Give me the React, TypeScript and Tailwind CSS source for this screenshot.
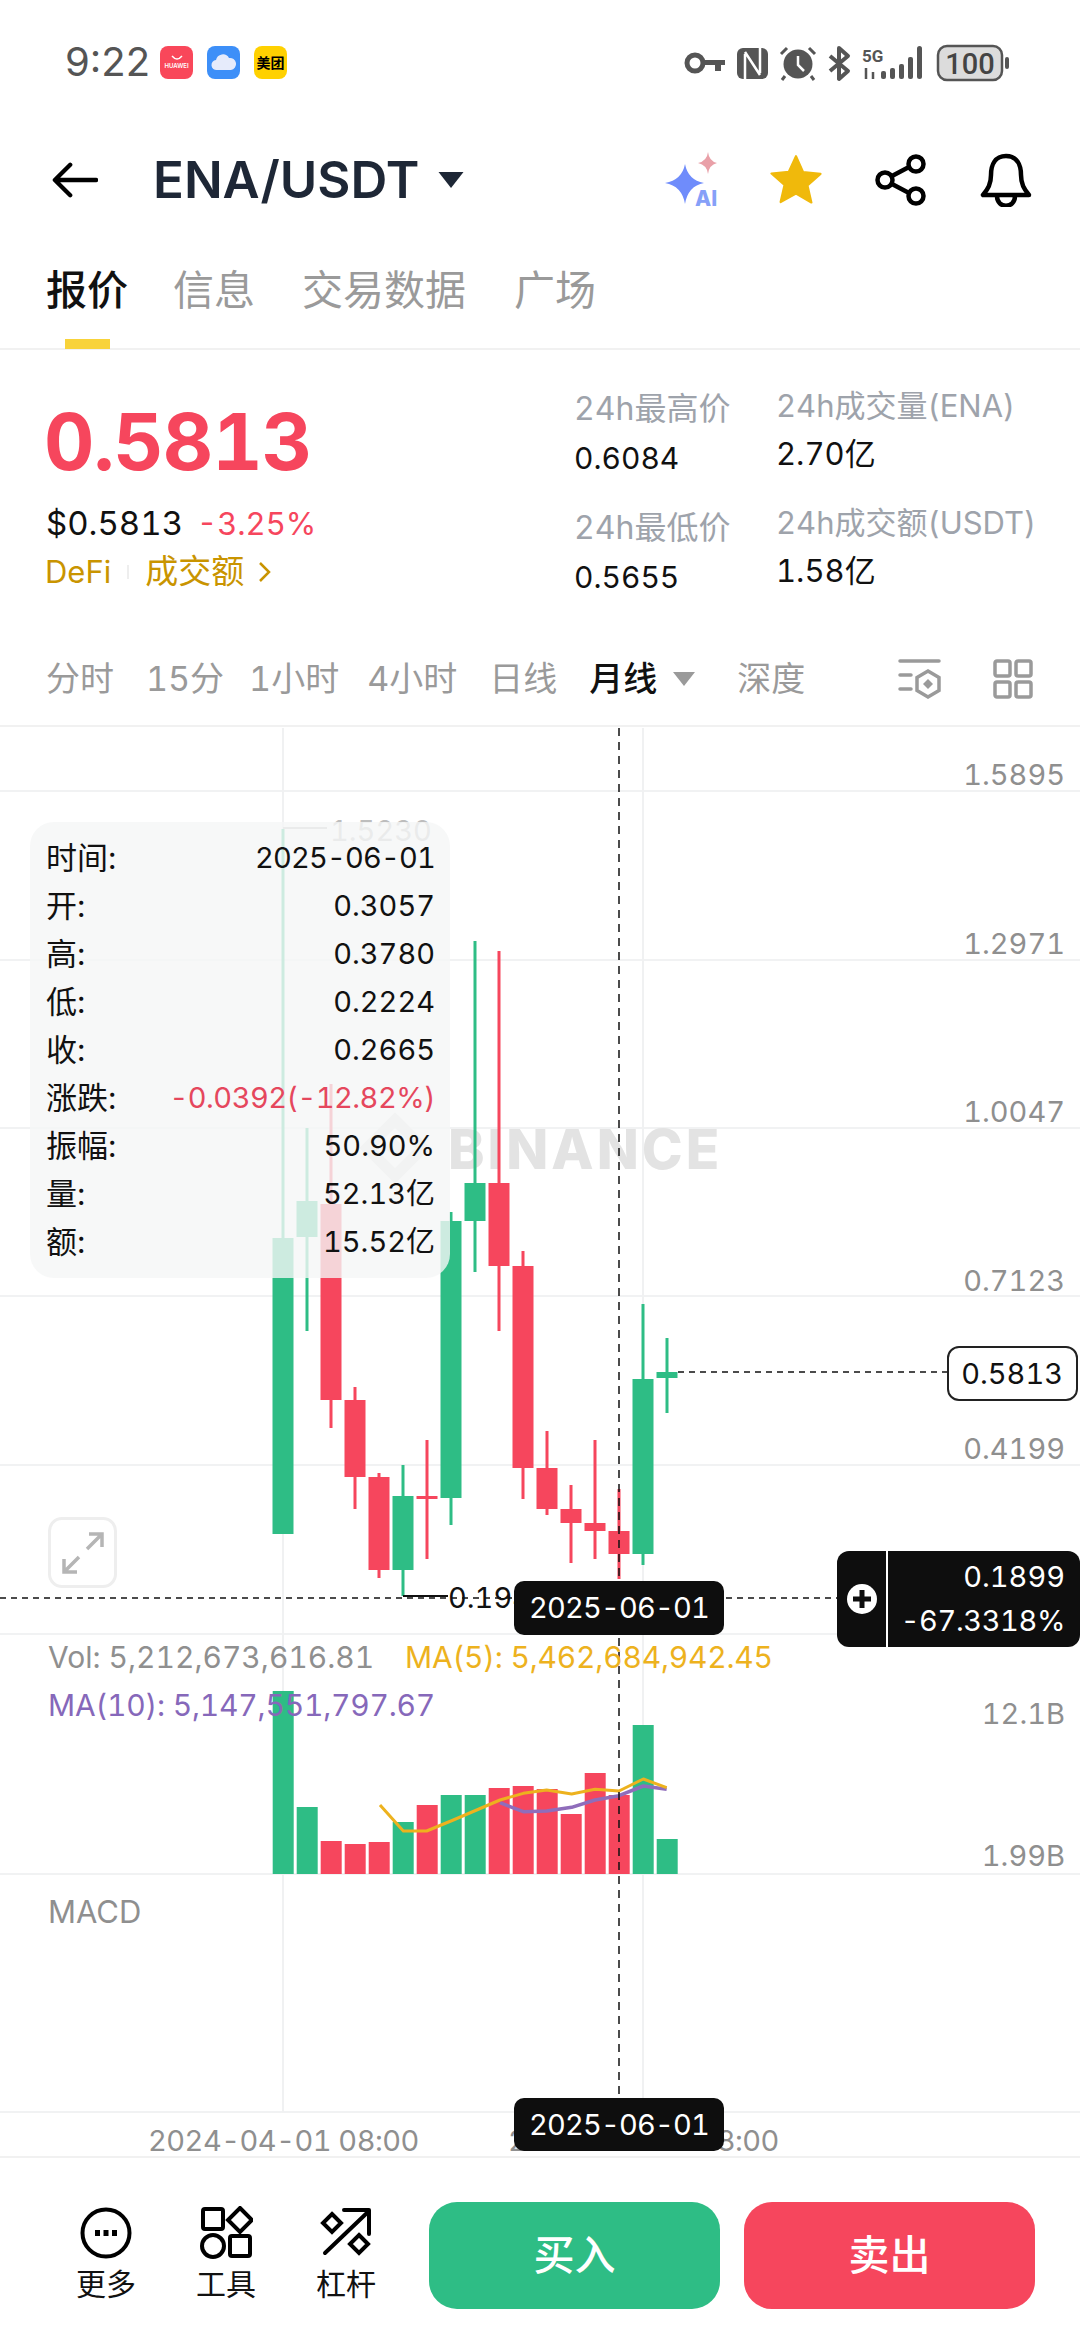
import React from "react";

const GREEN = "#2EBD85";
const RED = "#F6465D";

type C = { b: [number, number]; w: [number, number]; g: boolean };
const candles: C[] = [
  { b: [1238, 1534], w: [829, 1534], g: true },
  { b: [1201, 1237], w: [1128, 1331], g: true },
  { b: [1204, 1400], w: [1084, 1428], g: false },
  { b: [1400, 1477], w: [1387, 1509], g: false },
  { b: [1477, 1570], w: [1473, 1578], g: false },
  { b: [1496, 1570], w: [1465, 1596], g: true },
  { b: [1496, 1499], w: [1440, 1559], g: false },
  { b: [1221, 1498], w: [1212, 1525], g: true },
  { b: [1183, 1221], w: [941, 1272], g: true },
  { b: [1183, 1266], w: [951, 1331], g: false },
  { b: [1266, 1468], w: [1251, 1499], g: false },
  { b: [1468, 1509], w: [1431, 1515], g: false },
  { b: [1509, 1523], w: [1485, 1563], g: false },
  { b: [1523, 1531], w: [1440, 1559], g: false },
  { b: [1531, 1554], w: [1489, 1579], g: false },
  { b: [1379, 1554], w: [1304, 1565], g: true },
  { b: [1372, 1378], w: [1338, 1413], g: true },
];

const vols: [number, boolean][] = [
  [1691, true], [1807, true], [1841, false], [1844, false], [1842, false], [1822, true],
  [1805, false], [1795, true], [1795, true], [1788, false], [1786, false], [1789, false],
  [1814, false], [1773, false], [1795, false], [1725, true], [1839, true],
];

const toPts = (p: number[][]) => p.map(([x, y]) => `${240 + x / 3},${1650 + y / 3}`).join(" ");
const ma5 = toPts([[420,465],[490,543],[560,543],[640,510],[710,480],[780,450],[850,430],[920,420],[995,432],[1065,418],[1137,423],[1210,387],[1280,413]]);
const ma10 = toPts([[780,458],[850,485],[920,483],[995,472],[1065,450],[1137,437],[1210,408],[1280,418]]);

function ChartSvg() {
  return (
    <svg className="absolute inset-0 w-full h-full" viewBox="0 727 1080 1429">
      {[791, 960, 1128, 1296, 1465, 1634, 1874, 2112].map((y) => (
        <rect key={y} x="0" y={y - 1} width="1080" height="2" fill="#f1f2f3" />
      ))}
      <rect x="282" y="728" width="2" height="1384" fill="#f0f1f2" />
      <rect x="642" y="728" width="2" height="1384" fill="#f0f1f2" />
      <text x="448" y="1169" fontFamily="Inter" fontWeight="800" fontSize="55" letterSpacing="3" fill="#e3e3e3">BINANCE</text>
      <g fill="none" stroke="#e6e6e6" strokeWidth="11">
        <path d="M395 1120 L423 1148 L395 1176 L367 1148 Z" />
      </g>
      <rect x="388" y="1141" width="14" height="14" transform="rotate(45 395 1148)" fill="#e6e6e6" />
      {candles.map((c, i) => {
        const cx = 283 + 24 * i;
        const col = c.g ? GREEN : RED;
        return (
          <g key={i} fill={col}>
            <rect x={cx - 1.5} y={c.w[0]} width="3" height={c.w[1] - c.w[0]} />
            <rect x={cx - 10.5} y={c.b[0]} width="21" height={c.b[1] - c.b[0]} />
          </g>
        );
      })}
      {vols.map(([t, g], i) => (
        <rect key={i} x={272.7 + 24 * i} y={t} width="21" height={1874 - t} fill={g ? GREEN : RED} />
      ))}
      <polyline points={ma10} fill="none" stroke="#8F6DBB" strokeWidth="3.5" strokeLinejoin="round" />
      <polyline points={ma5} fill="none" stroke="#EDB21E" strokeWidth="3" strokeLinejoin="round" />
      <path d="M283 828 H327" stroke="#bdbdbd" strokeWidth="2" />
      <path d="M403 1596 H448" stroke="#111" strokeWidth="2" />
      <path d="M678 1372 H947" stroke="#111" strokeWidth="1.5" strokeDasharray="6 5" />
      <path d="M0 1598 H1080" stroke="#111" strokeWidth="1.5" strokeDasharray="6 5" />
      <path d="M619 728 V2150" stroke="#111" strokeWidth="1.5" strokeDasharray="8 6" />
    </svg>
  );
}

function Row({ k, v, red, date }: { k: string; v: string; red?: boolean; date?: boolean }) {
  return (
    <div className="flex h-[48px] items-center justify-between">
      <span className="text-[31px] text-[#111]">{k}</span>
      <span className={red ? "text-[29px] tracking-[-0.5px] text-[#e5475d]" : date ? "text-[29px] tracking-[-0.8px] text-[#111]" : "text-[29px] text-[#111]"}>{v}</span>
    </div>
  );
}

function BottomItem({ label, children }: { label: string; children: React.ReactNode }) {
  return (
    <div className="flex w-[120px] flex-col items-center">
      <svg width="54" height="54" viewBox="0 0 54 54" fill="none" stroke="#000" strokeWidth="4">{children}</svg>
      <span className="mt-[6px] text-[30px] leading-[36px] text-[#111]">{label}</span>
    </div>
  );
}

export default function App() {
  return (
    <div className="h-[2340px] w-[1080px] overflow-hidden bg-white font-['Inter','Noto_Sans_CJK_SC',sans-serif] tabular-nums">
      {/* status bar */}
      <div className="flex h-[120px] items-start justify-between pl-[65px] pr-[66px] pt-[44px]">
        <div className="flex h-[36px] items-center">
          <span className="w-[95px] text-[40px] leading-[36px] text-[#555] proportional-nums">9:22</span>
          <div className="flex h-[33px] w-[33px] flex-col items-center justify-center rounded-[8px] bg-[#F9475A]">
            <svg width="14" height="6" viewBox="0 0 14 6"><path d="M2 1 Q7 7 12 1" stroke="#fff" strokeWidth="1.4" fill="none" /></svg>
            <span className="text-[6px] leading-[9px] font-semibold text-white">HUAWEI</span>
          </div>
          <div className="ml-[14px] flex h-[33px] w-[33px] items-center justify-center rounded-[8px] bg-[#3D8FF8]">
            <svg width="26" height="20" viewBox="0 0 26 20"><path d="M6 18a5 5 0 0 1-1-10 7 7 0 0 1 13-2 6 6 0 0 1 2 12Z" fill="#E6EBFB" /></svg>
          </div>
          <div className="ml-[14px] flex h-[33px] w-[33px] items-center justify-center rounded-[8px] bg-[#FFD100]">
            <span className="text-[14px] leading-[33px] font-bold text-black">美团</span>
          </div>
        </div>
        <svg width="330" height="40" viewBox="684 42 330 40" fill="#555">
          <circle cx="695" cy="61" r="8" fill="none" stroke="#555" strokeWidth="5" />
          <path d="M703 58h22v5h-4v6h-6v-6h-12z" />
          <rect x="737" y="46" width="31" height="31" rx="6" />
          <path d="M745 77V52M760 46v25M745 50l15 23" stroke="#fff" strokeWidth="2.5" fill="none" />
          <circle cx="798" cy="62" r="14.5" />
          <path d="M798 54v9l6 6" stroke="#fff" strokeWidth="2.5" fill="none" />
          <path d="M781 52l6-6M809 46l6 6M785 74l-3 4M811 74l3 4" stroke="#555" strokeWidth="3" fill="none" />
          <path d="M830 54l18 15-9 8V46l9 8-18 15" stroke="#555" strokeWidth="4" fill="none" strokeLinejoin="round" />
          <text x="862" y="60" fontFamily="Roboto" fontWeight="700" fontSize="17" fill="#555">5G</text>
          <path d="M866 66v11M873 70v7" stroke="#555" strokeWidth="2.5" />
          <rect x="881" y="69" width="5" height="8" rx="2" />
          <rect x="890" y="66" width="5" height="11" rx="2" />
          <rect x="899" y="62" width="5" height="15" rx="2" />
          <rect x="908" y="55" width="5" height="22" rx="2" />
          <rect x="917" y="44" width="5" height="33" rx="2.5" />
          <rect x="938" y="44" width="64" height="34" rx="9" fill="#dcdcdc" stroke="#555" strokeWidth="2.5" />
          <text x="970" y="72" fontFamily="Roboto" fontWeight="500" fontSize="29" textAnchor="middle" fill="#444">100</text>
          <rect x="1005" y="55" width="4" height="12" rx="2" />
        </svg>
      </div>

      {/* header */}
      <div className="flex h-[120px] items-center pl-[52px] pr-[48px]">
        <svg width="46" height="40" viewBox="0 0 48 40" fill="none" stroke="#000" strokeWidth="4.5" strokeLinecap="round" strokeLinejoin="round">
          <path d="M46 20H4M19 4L3 20l16 16" />
        </svg>
        <span className="ml-[55px] text-[51px] leading-[60px] font-semibold text-[#1E2736]">ENA/USDT</span>
        <svg className="ml-[18px]" width="28" height="18" viewBox="0 0 27 18"><path d="M1 1h25L13.500 17z" fill="#1E2736" /></svg>
        <div className="ml-auto flex items-center">
          <svg className="overflow-visible" width="58" height="56" viewBox="0 0 58 56">
            <path d="M20 12 Q23 28 39 31 Q23 34 20 52 Q17 34 0 31 Q17 28 20 12Z" fill="#6F8CFB" />
            <path d="M43 0 Q44 9 52 11 Q44 13 43 22 Q42 13 33 11 Q42 9 43 0Z" fill="#E9A0A8" />
            <text x="30" y="54" fontFamily="Inter" fontWeight="800" fontSize="21" fill="#86A0F8">AI</text>
          </svg>
          <svg className="ml-[47px]" width="52" height="50" viewBox="0 0 24 23">
            <path d="M12 .5l3.3 7.400 8 .8-6 5.300 1.800 7.900L12 17.800l-7.100 3.900 1.800-7.900-6-5.300 8-.8z" fill="#F0B90B" stroke="#F0B90B" strokeLinejoin="round" />
          </svg>
          <svg className="ml-[53px]" width="52" height="52" viewBox="0 0 52 52" fill="none" stroke="#000" strokeWidth="4.5">
            <circle cx="10" cy="26" r="7.5" />
            <circle cx="41" cy="10" r="7.5" />
            <circle cx="41" cy="42" r="7.5" />
            <path d="M17 22L34 13M17 30l17 9" />
          </svg>
          <svg className="ml-[53px]" width="52" height="54" viewBox="0 0 52 54" fill="none" stroke="#000" strokeWidth="4.5" strokeLinejoin="round">
            <path d="M26 3C15 3 11 12 11 22c0 9-3 14-8 20h46c-5-6-8-11-8-20C41 12 37 3 26 3Z" />
            <path d="M17 43c0 13 18 13 18 0" />
          </svg>
        </div>
      </div>

      {/* tabs */}
      <div className="relative flex h-[110px] items-center border-b-2 border-[#f1f1f1] pb-[8px] pl-[46px] text-[41px] leading-[50px] text-[#9a9a9a]">
        <span className="font-medium text-[#111]">报价</span>
        <span className="ml-[45px]">信息</span>
        <span className="ml-[47px]">交易数据</span>
        <span className="ml-[48px]">广场</span>
        <div className="absolute bottom-[-1px] left-[65px] h-[10px] w-[45px] bg-[#F8D33A]" />
      </div>

      {/* stats */}
      <div className="flex h-[289px]">
        <div className="w-[574px] pl-[44px] pt-[47px]">
          <div className="h-[90px] text-[78px] leading-[90px] font-bold tracking-[-1px] text-[#F6465D]">0.5813</div>
          <div className="mt-[15px] flex h-[44px] items-center pl-[2px]">
            <span className="text-[33px] text-[#111]">$0.5813</span>
            <span className="ml-[14px] text-[31px] text-[#F6465D]">-3.25%</span>
          </div>
          <div className="mt-[4px] flex h-[44px] items-center pl-[1px] text-[#C99400]">
            <span className="text-[31px]">DeFi</span>
            <span className="ml-[16px] h-[14px] w-[2px] bg-[#eeeeee]" />
            <span className="ml-[16px] text-[33px]">成交额</span>
            <svg className="ml-[14px]" width="14" height="24" viewBox="0 0 14 24" fill="none" stroke="#C99400" strokeWidth="2.5"><path d="M2 3l9 9-9 9" /></svg>
          </div>
        </div>
        <div className="w-[202px] pt-[35px] text-[32px] leading-[48px]">
          <div className="text-[#9ea3ab]">24h最高价</div>
          <div className="mt-[1px] text-[30px] text-[#111]">0.6084</div>
          <div className="mt-[22px] text-[#9ea3ab]">24h最低价</div>
          <div className="mt-[1px] text-[30px] text-[#111]">0.5655</div>
        </div>
        <div className="pt-[32px] text-[31px] leading-[48px]">
          <div className="text-[#9ea3ab]">24h成交量(ENA)</div>
          <div className="text-[#111]">2.70亿</div>
          <div className="mt-[21px] text-[#9ea3ab]">24h成交额(USDT)</div>
          <div className="text-[#111]">1.58亿</div>
        </div>
      </div>

      {/* intervals */}
      <div className="flex h-[86px] items-center pb-[6px] pl-[46px] pr-[47px] text-[34px] leading-[44px] text-[#9a9a9a]">
        <span>分时</span>
        <span className="ml-[32px]">15分</span>
        <span className="ml-[25px]">1小时</span>
        <span className="ml-[28px]">4小时</span>
        <span className="ml-[32px]">日线</span>
        <span className="ml-[32px] font-medium text-[#111]">月线</span>
        <svg className="ml-[16px]" width="22" height="14" viewBox="0 0 22 14"><path d="M0 0h22L11 14z" fill="#9a9a9a" /></svg>
        <span className="ml-[42px]">深度</span>
        <svg className="ml-auto" width="44" height="42" viewBox="0 0 44 42" fill="none" stroke="#9a9a9a" strokeWidth="3.5" strokeLinecap="round">
          <path d="M2 3h39M2 17h11M2 31h11" />
          <path d="M30 13l11 6.500v13L30 39l-11-6.500v-13z" />
          <path d="M30 21l5 5-5 5-5-5z" fill="#9a9a9a" stroke="none" />
        </svg>
        <svg className="ml-[51px]" width="40" height="40" viewBox="0 0 40 40" fill="none" stroke="#9a9a9a" strokeWidth="3.5">
          <rect x="2" y="2" width="15" height="15" rx="2" />
          <rect x="23" y="2" width="15" height="15" rx="2" />
          <rect x="2" y="23" width="15" height="15" rx="2" />
          <rect x="23" y="23" width="15" height="15" rx="2" />
        </svg>
      </div>

      {/* chart canvas */}
      <div className="relative h-[1431px] border-t-2 border-[#f1f1f1] text-[29px] leading-[36px] text-[#8f8f8f]">
        <ChartSvg />
        <span className="absolute right-[15px] top-[30px]">1.5895</span>
        <span className="absolute right-[15px] top-[199px]">1.2971</span>
        <span className="absolute right-[15px] top-[367px]">1.0047</span>
        <span className="absolute right-[15px] top-[536px]">0.7123</span>
        <span className="absolute right-[15px] top-[704px]">0.4199</span>
        <span className="absolute right-[15px] top-[969px]">12.1B</span>
        <span className="absolute right-[15px] top-[1111px]">1.99B</span>
        <span className="absolute left-[330px] top-[86px] text-[#bdbdbd]">1.5230</span>
        <span className="absolute left-[448px] top-[853px] text-[#111]">0.1940</span>

        {/* info card */}
        <div className="absolute left-[30px] top-[95px] flex h-[456px] w-[420px] flex-col justify-center rounded-[24px] bg-[#f5f6f6]/80 pl-[16px] pr-[15px]">
          <Row k="时间:" v="2025-06-01" date />
          <Row k="开:" v="0.3057" />
          <Row k="高:" v="0.3780" />
          <Row k="低:" v="0.2224" />
          <Row k="收:" v="0.2665" />
          <Row k="涨跌:" v="-0.0392(-12.82%)" red />
          <Row k="振幅:" v="50.90%" />
          <Row k="量:" v="52.13亿" />
          <Row k="额:" v="15.52亿" />
        </div>

        {/* current price */}
        <div className="absolute left-[947px] top-[619px] flex h-[55px] w-[131px] items-center justify-end rounded-[12px] border-2 border-[#222] bg-white pr-[13px] text-[#111]">0.5813</div>

        {/* expand */}
        <div className="absolute left-[48px] top-[790px] flex h-[71px] w-[69px] items-center justify-center rounded-[14px] border-[3px] border-[#eeeeee]">
          <svg width="46" height="46" viewBox="0 0 46 46" fill="none" stroke="#b5b5b5" strokeWidth="3.5">
            <path d="M27 19L41 5M29 4h13v13M19 27L5 41M4 29v13h13" />
          </svg>
        </div>

        {/* crosshair date */}
        <div className="absolute left-[514px] top-[854px] flex h-[54px] w-[210px] items-center justify-center rounded-[10px] bg-[#0e0e0e] tracking-[-0.8px] text-white">2025-06-01</div>

        {/* crosshair price */}
        <div className="absolute left-[837px] top-[824px] flex h-[96px] w-[243px] rounded-[12px] bg-[#0e0e0e]">
          <div className="flex w-[49px] items-center justify-center">
            <svg width="30" height="30" viewBox="0 0 30 30">
              <circle cx="15" cy="15" r="15" fill="#fff" />
              <path d="M15 6v18M6 15h18" stroke="#0e0e0e" strokeWidth="5" />
            </svg>
          </div>
          <div className="w-[2px] bg-white" />
          <div className="flex flex-1 flex-col items-end justify-center pr-[15px] leading-[44px] text-white">
            <span>0.1899</span>
            <span className="tracking-[-0.4px]">-67.3318%</span>
          </div>
        </div>

        {/* legends */}
        <div className="absolute left-[48px] top-[912px] flex text-[30px]">
          <span className="w-[357px]">Vol: 5,212,673,616.81</span>
          <span className="tracking-[-0.2px] text-[#EDB21E]">MA(5): 5,462,684,942.45</span>
        </div>
        <span className="absolute left-[48px] top-[960px] text-[30px] tracking-[-0.2px] text-[#8668BA]">MA(10): 5,147,551,797.67</span>
        <span className="absolute left-[48px] top-[1167px] text-[31px]">MACD</span>

        {/* axis dates */}
        <span className="absolute left-[148px] top-[1399px] leading-[30px] tracking-[-0.5px]">2024-04-01 08:00</span>
        <span className="absolute left-[508px] top-[1399px] leading-[30px] tracking-[-0.5px]">2025-07-01 08:00</span>
        <div className="absolute left-[514px] top-[1371px] flex h-[53px] w-[210px] items-center justify-center rounded-[10px] bg-[#0e0e0e] tracking-[-0.8px] text-white">2025-06-01</div>
      </div>

      {/* bottom bar */}
      <div className="flex h-[183px] border-t-2 border-[#f1f1f1] pl-[46px] pr-[45px] pt-[44px]">
        <div className="mt-[4px] flex">
          <BottomItem label="更多">
            <circle cx="27" cy="27" r="23.5" />
            <path d="M16 24h5v6h-5zM24.500 24h5v6h-5zM33 24h5v6h-5z" fill="#000" stroke="none" />
          </BottomItem>
          <BottomItem label="工具">
            <rect x="4" y="3" width="20" height="20" rx="2" />
            <path d="M42 3l12 12-12 12-12-12z" transform="translate(-1 -1)" />
            <circle cx="14" cy="40" r="11" />
            <rect x="31" y="30" width="20" height="20" rx="2" />
          </BottomItem>
          <BottomItem label="杠杆">
            <path d="M6 47L50 5M25 4h25v24" strokeLinecap="round" strokeLinejoin="round" />
            <path d="M10 8l9 9-9 9-9-9z" transform="translate(3 0)" />
            <path d="M40 29l9 9-9 9-9-9z" />
          </BottomItem>
        </div>
        <button className="ml-[23px] h-[107px] w-[291px] rounded-[28px] bg-[#2EBD85] text-[41px] font-medium text-white">买入</button>
        <button className="ml-[24px] h-[107px] w-[291px] rounded-[28px] bg-[#F6465D] text-[41px] font-medium text-white">卖出</button>
      </div>
    </div>
  );
}
